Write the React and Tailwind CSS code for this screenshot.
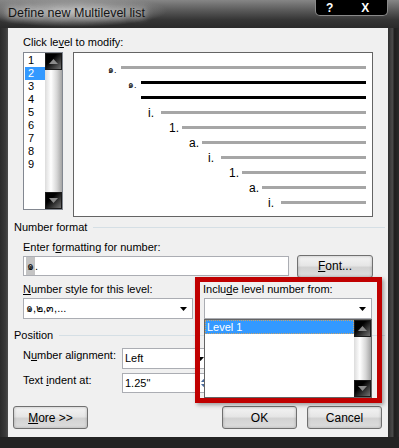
import React from "react";

const rows = [
  { pl: "pl-[34px]", label: "๑.", thai: true, black: false },
  { pl: "pl-[54px]", label: "๑.", thai: true, black: true },
  { pl: "pl-[54px]", label: "", thai: false, black: true },
  { pl: "pl-[74px]", label: "i.", thai: false, black: false },
  { pl: "pl-[95px]", label: "1.", thai: false, black: false },
  { pl: "pl-[115px]", label: "a.", thai: false, black: false },
  { pl: "pl-[134px]", label: "i.", thai: false, black: false },
  { pl: "pl-[155px]", label: "1.", thai: false, black: false },
  { pl: "pl-[175px]", label: "a.", thai: false, black: false },
  { pl: "pl-[194px]", label: "i.", thai: false, black: false },
];

function ScrollBtn({ up }) {
  return (
    <div className="h-[17px] w-[17px] shrink-0 border border-[#1a1a1a] bg-[linear-gradient(135deg,#000_35%,#727272)] flex items-center justify-center">
      <svg width="9" height="5" viewBox="0 0 9 5">
        <polygon points={up ? "0,5 4.5,0 9,5" : "0,0 9,0 4.5,5"} fill="#8c8c8c" />
      </svg>
    </div>
  );
}

function ScrollBar() {
  return (
    <div className="w-[17px] h-full flex flex-col shrink-0">
      <ScrollBtn up />
      <div className="flex-1 bg-[linear-gradient(to_right,#dcdcdc,#ffffff_35%,#d6d6d6_70%,#a4a4a4)]" />
      <ScrollBtn />
    </div>
  );
}

function Arrow() {
  return (
    <svg width="7" height="4" viewBox="0 0 7 4">
      <polygon points="0,0 7,0 3.5,4" fill="#000" />
    </svg>
  );
}

function Combo({ className, children }) {
  return (
    <div className={`h-[21px] border border-[#abadb3] bg-white flex items-center shrink-0 ${className}`}>
      <div className="flex-1 pl-[2px] whitespace-nowrap overflow-hidden leading-[19px]">{children}</div>
      <div className="w-[17px] flex items-center justify-center">
        <Arrow />
      </div>
    </div>
  );
}

function Btn({ className, children }) {
  return (
    <div
      className={`h-[23px] w-[75px] shrink-0 flex items-center justify-center rounded-[3px] border border-[#707070] bg-[linear-gradient(to_bottom,#f4f4f4,#e6e6e6_45%,#d2d2d2_55%,#dedede)] shadow-[inset_0_0_3px_rgba(0,0,0,0.25)] text-[12px] ${className}`}
    >
      {children}
    </div>
  );
}

function Preview() {
  return (
    <div className="w-[300px] h-[165px] border border-[#646464] bg-white pt-[7px] pr-[6px] font-['Liberation_Sans','Noto_Sans',sans-serif]">
      {rows.map((r, i) => (
        <div key={i} className={`flex items-center h-[15px] ${r.pl}`}>
          <span
            className={`w-[13px] shrink-0 ${r.thai ? "text-[9px] leading-[15px] pt-[5px]" : "text-[12px] leading-[15px] pt-[2px]"}`}
          >
            {r.label}
          </span>
          <div className={`flex-1 h-[3px] ${r.black ? "bg-black" : "bg-[#a6a6a6]"}`} />
        </div>
      ))}
    </div>
  );
}

function LevelList() {
  const levels = [1, 2, 3, 4, 5, 6, 7, 8, 9];
  return (
    <div className="w-[40px] h-[158px] border border-[#828790] bg-white flex shrink-0">
      <div className="flex-1 pt-[1px] pl-[1px]">
        {levels.map((n) => (
          <div
            key={n}
            className={`h-[13px] leading-[13px] pl-[3px] ${n === 2 ? "bg-[#3399ff] text-white" : ""}`}
          >
            {n}
          </div>
        ))}
      </div>
      <ScrollBar />
    </div>
  );
}

function SectionHead({ label, className }) {
  return (
    <div className={`flex items-center h-[14px] pl-[6px] pr-[3px] ${className}`}>
      <span className="leading-[14px] whitespace-nowrap">{label}</span>
      <div className="flex-1 ml-[6px] h-0 border-t border-[#d5dfe5]" />
    </div>
  );
}

export default function App() {
  return (
    <div className="w-[399px] h-[448px] bg-[#262626] flex flex-col overflow-hidden font-['Liberation_Sans','Noto_Sans',sans-serif] text-[11px] text-black">
      {/* Title bar */}
      <div className="h-[28px] shrink-0 flex items-start bg-[radial-gradient(ellipse_95px_16px_at_72px_11px,rgba(185,185,185,0.95),rgba(160,160,160,0.55)_60%,rgba(140,140,140,0)),linear-gradient(to_bottom,#868686,#5c5c5c_35%,#363636_70%,#2a2a2a)]">
        <div className="pl-[8px] pt-[6px] text-[12.5px] leading-[14px] text-[#141414] [text-shadow:0_0_6px_#d6d6d6,0_0_8px_#cfcfcf]">
          Define new Multilevel list
        </div>
        <div className="flex-1" />
        <div className="mr-[11px] w-[73px] h-[16px] bg-black border border-[#8a8a8a] border-t-0 rounded-b-[5px] flex items-center text-white font-bold text-[12px] leading-none">
          <span className="ml-[10px]">?</span>
          <span className="ml-[28px]">X</span>
        </div>
      </div>

      <div className="flex flex-1">
        <div className="w-[8px] bg-[linear-gradient(to_right,#2a2a2a,#3a3a3a_70%,#4c4c4c)]" />

        {/* Body */}
        <div className="relative w-[380px] h-[409px] bg-[#f0f0f0] flex flex-col pt-[7px]">
          <div className="pl-[15px] leading-[14px]">
            Click le<u>v</u>el to modify:
          </div>
          <div className="flex mt-[3px] pl-[15px] items-start">
            <LevelList />
            <div className="ml-[10px]">
              <Preview />
            </div>
          </div>

          <SectionHead label="Number format" className="mt-[3px]" />

          <div className="pl-[15px] leading-[14px] mt-[6px]">
            Enter f<u>o</u>rmatting for number:
          </div>
          <div className="flex items-center h-[22px] mt-[1px] pl-[15px]">
            <div className="w-[266px] h-[20px] border border-[#abadb3] bg-white flex items-center pl-[2px] leading-[18px]">
              <span className="bg-[#c4c4c4] px-[1px]">๑</span>
              <span>.</span>
            </div>
            <Btn className="ml-[8px] w-[76px] h-[22px]">
              <span>
                <u>F</u>ont...
              </span>
            </Btn>
          </div>

          <div className="flex mt-[5px]">
            <div className="w-[195px] pl-[15px]">
              <div className="leading-[14px]">
                <u>N</u>umber style for this level:
              </div>
              <Combo className="w-[170px] mt-[2px]">๑,๒,๓,...</Combo>
            </div>
            <div className="flex-1">
              <div className="leading-[14px]">
                Inclu<u>d</u>e level number from:
              </div>
              <Combo className="w-[168px] mt-[2px] ml-[1px]"></Combo>
            </div>
          </div>

          <SectionHead label="Position" className="mt-[9px]" />

          <div className="flex items-start mt-[6px] pl-[15px]">
            <div className="w-[99px] leading-[14px]">
              N<u>u</u>mber alignment:
            </div>
            <Combo className="w-[88px]">Left</Combo>
          </div>
          <div className="flex items-start mt-[4px] pl-[15px]">
            <div className="w-[99px] leading-[14px]">
              Text <u>i</u>ndent at:
            </div>
            <div className="w-[88px] h-[20px] border border-[#abadb3] bg-white flex items-center">
              <div className="flex-1 pl-[2px]">1.25"</div>
              <div className="w-[13px] h-full border-l border-[#b5b5b5] flex flex-col items-center justify-center gap-[2px]">
                <svg width="5" height="3" viewBox="0 0 5 3">
                  <polygon points="0,3 2.5,0 5,3" fill="#4a6a9a" />
                </svg>
                <svg width="5" height="3" viewBox="0 0 5 3">
                  <polygon points="0,0 5,0 2.5,3" fill="#4a6a9a" />
                </svg>
              </div>
            </div>
          </div>

          <div className="flex mt-[13px] pl-[5px]">
            <Btn>
              <span>
                <u>M</u>ore &gt;&gt;
              </span>
            </Btn>
            <Btn className="ml-[134px]">OK</Btn>
            <Btn className="ml-[10px]">Cancel</Btn>
          </div>

          {/* Open dropdown list */}
          <div className="absolute left-[196px] top-[291px] w-[168px] h-[79px] border border-[#646464] bg-white flex">
            <div className="flex-1">
              <div className="h-[14px] mt-[0px] bg-[#3399ff] text-white leading-[13px] pl-[1px] border border-dotted border-[#c9a46a]">
                Level 1
              </div>
            </div>
            <ScrollBar />
          </div>

          {/* Red annotation box */}
          <div className="absolute left-[187px] top-[249px] w-[187px] h-[126px] border-[5px] border-[#c00000] shadow-[2px_2px_4px_rgba(0,0,0,0.35)]" />
        </div>

        <div className="w-[11px] bg-[linear-gradient(to_right,#2e2e2e,#4a4a4a_40%,#1e1e1e_60%,#2a2a2a)]" />
      </div>
      <div className="h-[11px] shrink-0 bg-[#232323]" />
    </div>
  );
}
